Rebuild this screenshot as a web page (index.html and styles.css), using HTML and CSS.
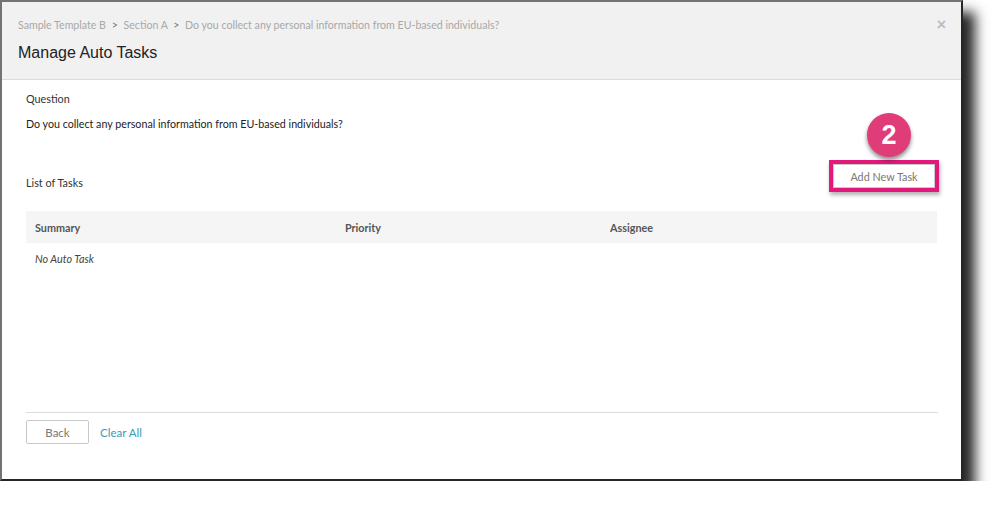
FILE: index.html
```html
<!DOCTYPE html>
<html>
<head>
  <meta charset="UTF-8">
  <meta name="viewport" content="width=device-width, initial-scale=1.0">
  <title>Manage Auto Tasks</title>
  <link rel="stylesheet" href="styles.css">
</head>
<body>

  <div class="modal">
    <!-- 標題列 -->
    <div class="modal-header">
      <div class="header-top">
        <div class="breadcrumb">
          <span>Sample Template B</span>
          <span class="sep">&gt;</span>
          <span>Section A</span>
          <span class="sep">&gt;</span>
          <span>Do you collect any personal information from EU-based individuals?</span>
        </div>
        <span class="close">&times;</span>
      </div>
      <h2 class="title">Manage Auto Tasks</h2>
    </div>

    <div class="modal-body">
      <div class="label">Question</div>
      <div class="question">Do you collect any personal information from EU-based individuals?</div>

      <div class="list-row">
        <div class="label list-label">List of Tasks</div>
        <button class="btn btn-add">Add New Task</button>
      </div>
      <div class="step-badge">2</div>

      <div class="task-table">
        <div class="task-head">
          <div>Summary</div>
          <div>Priority</div>
          <div>Assignee</div>
        </div>
        <div class="task-empty">No Auto Task</div>
      </div>
    </div>

    <div class="modal-footer">
      <button class="btn btn-back">Back</button>
      <a class="link" href="#">Clear All</a>
    </div>
  </div>

</body>
</html>
```

FILE: styles.css
```css
body {
  margin: 0;
  background: #fff;
  font-family: Lato, "Open Sans", sans-serif;
  color: #333;
}
.modal {
  width: 959px;
  height: 477px;
  border: 2px solid #737373;
  border-right-color: #262626;
  border-bottom-color: #262626;
  background: #fff;
  box-shadow: 12px 12px 12px rgba(0, 0, 0, 0.85);
  display: flex;
  flex-direction: column;
}
.modal-header {
  background: #f1f1f1;
  border-bottom: 1px solid #dcdcdc;
  height: 78px;
  box-sizing: border-box;
  padding: 16px 15px 0 16px;
}
.header-top {
  display: flex;
  justify-content: space-between;
  align-items: center;
}
.breadcrumb {
  font-size: 10.6px;
  line-height: 14px;
  color: #a8a8a8;
}
.breadcrumb .sep {
  color: #777;
  margin: 0 3px;
}
.close {
  color: #bdbdbd;
  font-family: "Liberation Sans", sans-serif;
  font-weight: bold;
  font-size: 16px;
  line-height: 14px;
}
.title {
  margin: 11px 0 0 0;
  font-family: "Liberation Sans", Arial, sans-serif;
  font-weight: normal;
  font-size: 16px;
  line-height: 20px;
  color: #222;
}
.modal-body {
  flex: 1;
  position: relative;
  padding: 12px 24px 0 24px;
}
.label {
  font-size: 10.8px;
  line-height: 14px;
  color: #333;
}
.question {
  margin-top: 11px;
  font-size: 10.7px;
  line-height: 14px;
  color: #222;
}
.list-row {
  display: flex;
  justify-content: space-between;
  align-items: flex-start;
  margin-top: 33px;
}
.list-label {
  padding-top: 12px;
}
.btn {
  font-family: Lato, "Open Sans", sans-serif;
  background: #fff;
  border: 1px solid #c8c8c8;
  border-radius: 2px;
  color: #777;
  cursor: pointer;
}
.btn-add {
  width: 102px;
  height: 24px;
  font-size: 10.8px;
  margin-right: 2px;
  border-radius: 0;
  outline: 4px solid #e2197b;
  box-shadow: 1px 3px 4px 4px rgba(0, 0, 0, 0.3);
}
.step-badge {
  position: absolute;
  left: 865px;
  top: 33px;
  width: 44px;
  height: 44px;
  border-radius: 50%;
  background: #e03c78;
  color: #fff;
  font-family: "Liberation Sans", Arial, sans-serif;
  font-weight: bold;
  font-size: 27px;
  line-height: 44px;
  text-align: center;
  box-shadow: 0 3px 4px rgba(0, 0, 0, 0.45);
}
.task-table {
  margin-top: 21px;
}
.task-head {
  display: grid;
  grid-template-columns: 310px 265px 1fr;
  background: #f5f5f5;
  height: 32px;
  align-items: center;
  font-size: 10.8px;
  font-weight: bold;
  color: #555;
}
.task-head div {
  padding-left: 9px;
}
.task-empty {
  padding-left: 9px;
  height: 32px;
  line-height: 32px;
  font-size: 10.8px;
  font-style: italic;
  color: #444;
}
.modal-footer {
  margin: 0 23px 0 24px;
  border-top: 1px solid #dcdcdc;
  padding: 7px 0 35px 0;
  display: flex;
  align-items: center;
  gap: 11px;
}
.btn-back {
  width: 63px;
  height: 24px;
  font-size: 11.5px;
}
.link {
  color: #3a9ab6;
  font-size: 11.5px;
  text-decoration: none;
}
```
